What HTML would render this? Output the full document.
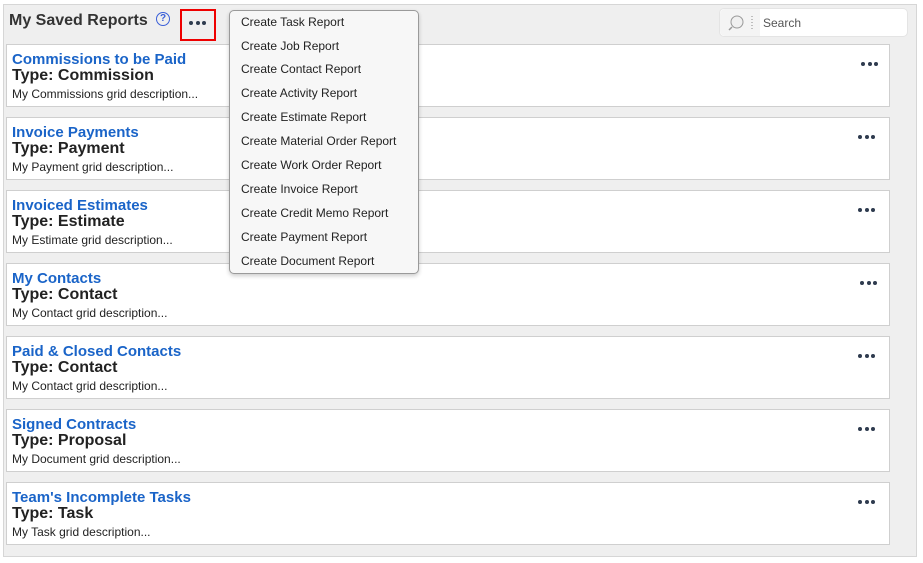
<!DOCTYPE html>
<html><head><meta charset="utf-8"><style>
body{margin:0;width:923px;height:563px;background:#fff;font-family:"Liberation Sans",Arial,sans-serif;position:relative;overflow:hidden}
.outer{position:absolute;left:3px;top:4px;width:912px;height:551px;background:#efefef;border:1px solid #d6d6d6}
.title{position:absolute;left:9px;top:12px;font-size:16px;font-weight:bold;color:#333}
.help{position:absolute;left:156px;top:12px;width:12px;height:12px;border:1px solid #3a5fd8;border-radius:50%;color:#3a5fd8;font-size:10px;text-align:center;line-height:12px;font-weight:bold}
.redbox{position:absolute;left:180px;top:9px;width:32px;height:28px;border:2px solid #e00}
.dots{position:absolute;display:flex;gap:2.5px;height:4px}
.dots i{display:block;width:4px;height:4px;border-radius:50%;background:#2e3b4e}
.search{position:absolute;left:719px;top:8px;width:187px;height:27px;background:#fff;border:1px solid #e4e4e4;border-radius:5px}
.search span{position:absolute;left:43px;top:7px;font-size:12px;color:#555}
.search .ic{position:absolute;left:0;top:0;width:40px;height:27px;background:#f4f4f4;border-radius:5px 0 0 5px}
.card{position:absolute;left:6px;width:882px;height:61px;background:#fff;border:1px solid #cfcfcf}
.card .n{position:absolute;left:5px;top:6px;font-size:15px;font-weight:bold;color:#1a64c8}
.card .t{position:absolute;left:5px;top:22px;font-size:16px;font-weight:bold;color:#222}
.card .d{position:absolute;left:5px;top:42px;font-size:12px;color:#222}
.menu{position:absolute;left:229px;top:10px;width:188px;height:262px;background:#f7f7f7;border:1px solid #9a9a9a;border-radius:5px;box-shadow:0 2px 4px rgba(0,0,0,.2)}
.menu div{position:absolute;left:11px;font-size:12px;color:#222}
</style></head><body>
<div class="outer"></div>
<div class="title">My Saved Reports</div>
<div class="help">?</div>
<div class="redbox"></div>
<div class="dots" style="left:189px;top:21px"><i></i><i></i><i></i></div>
<div class="search"><div class="ic"><svg width="40" height="27"><circle cx="17" cy="13" r="6" fill="#f0f0f0" stroke="#999"/><line x1="12" y1="18" x2="9" y2="21" stroke="#999" stroke-width="1.5"/><line x1="32" y1="7" x2="32" y2="21" stroke="#888" stroke-dasharray="1,2"/></svg></div><span>Search</span></div>

<div class="card" style="top:44px"><div class="n">Commissions to be Paid</div><div class="t">Type: Commission</div><div class="d">My Commissions grid description...</div><div class="dots" style="left:854px;top:17px"><i></i><i></i><i></i></div></div>
<div class="card" style="top:117px"><div class="n">Invoice Payments</div><div class="t">Type: Payment</div><div class="d">My Payment grid description...</div><div class="dots" style="left:851px;top:17px"><i></i><i></i><i></i></div></div>
<div class="card" style="top:190px"><div class="n">Invoiced Estimates</div><div class="t">Type: Estimate</div><div class="d">My Estimate grid description...</div><div class="dots" style="left:851px;top:17px"><i></i><i></i><i></i></div></div>
<div class="card" style="top:263px"><div class="n">My Contacts</div><div class="t">Type: Contact</div><div class="d">My Contact grid description...</div><div class="dots" style="left:853px;top:17px"><i></i><i></i><i></i></div></div>
<div class="card" style="top:336px"><div class="n">Paid &amp; Closed Contacts</div><div class="t">Type: Contact</div><div class="d">My Contact grid description...</div><div class="dots" style="left:851px;top:17px"><i></i><i></i><i></i></div></div>
<div class="card" style="top:409px"><div class="n">Signed Contracts</div><div class="t">Type: Proposal</div><div class="d">My Document grid description...</div><div class="dots" style="left:851px;top:17px"><i></i><i></i><i></i></div></div>
<div class="card" style="top:482px"><div class="n">Team's Incomplete Tasks</div><div class="t">Type: Task</div><div class="d">My Task grid description...</div><div class="dots" style="left:851px;top:17px"><i></i><i></i><i></i></div></div>

<div class="menu">
<div style="top:4px">Create Task Report</div>
<div style="top:28px">Create Job Report</div>
<div style="top:51px">Create Contact Report</div>
<div style="top:75px">Create Activity Report</div>
<div style="top:99px">Create Estimate Report</div>
<div style="top:123px">Create Material Order Report</div>
<div style="top:147px">Create Work Order Report</div>
<div style="top:171px">Create Invoice Report</div>
<div style="top:195px">Create Credit Memo Report</div>
<div style="top:219px">Create Payment Report</div>
<div style="top:243px">Create Document Report</div>
</div>
</body></html>
